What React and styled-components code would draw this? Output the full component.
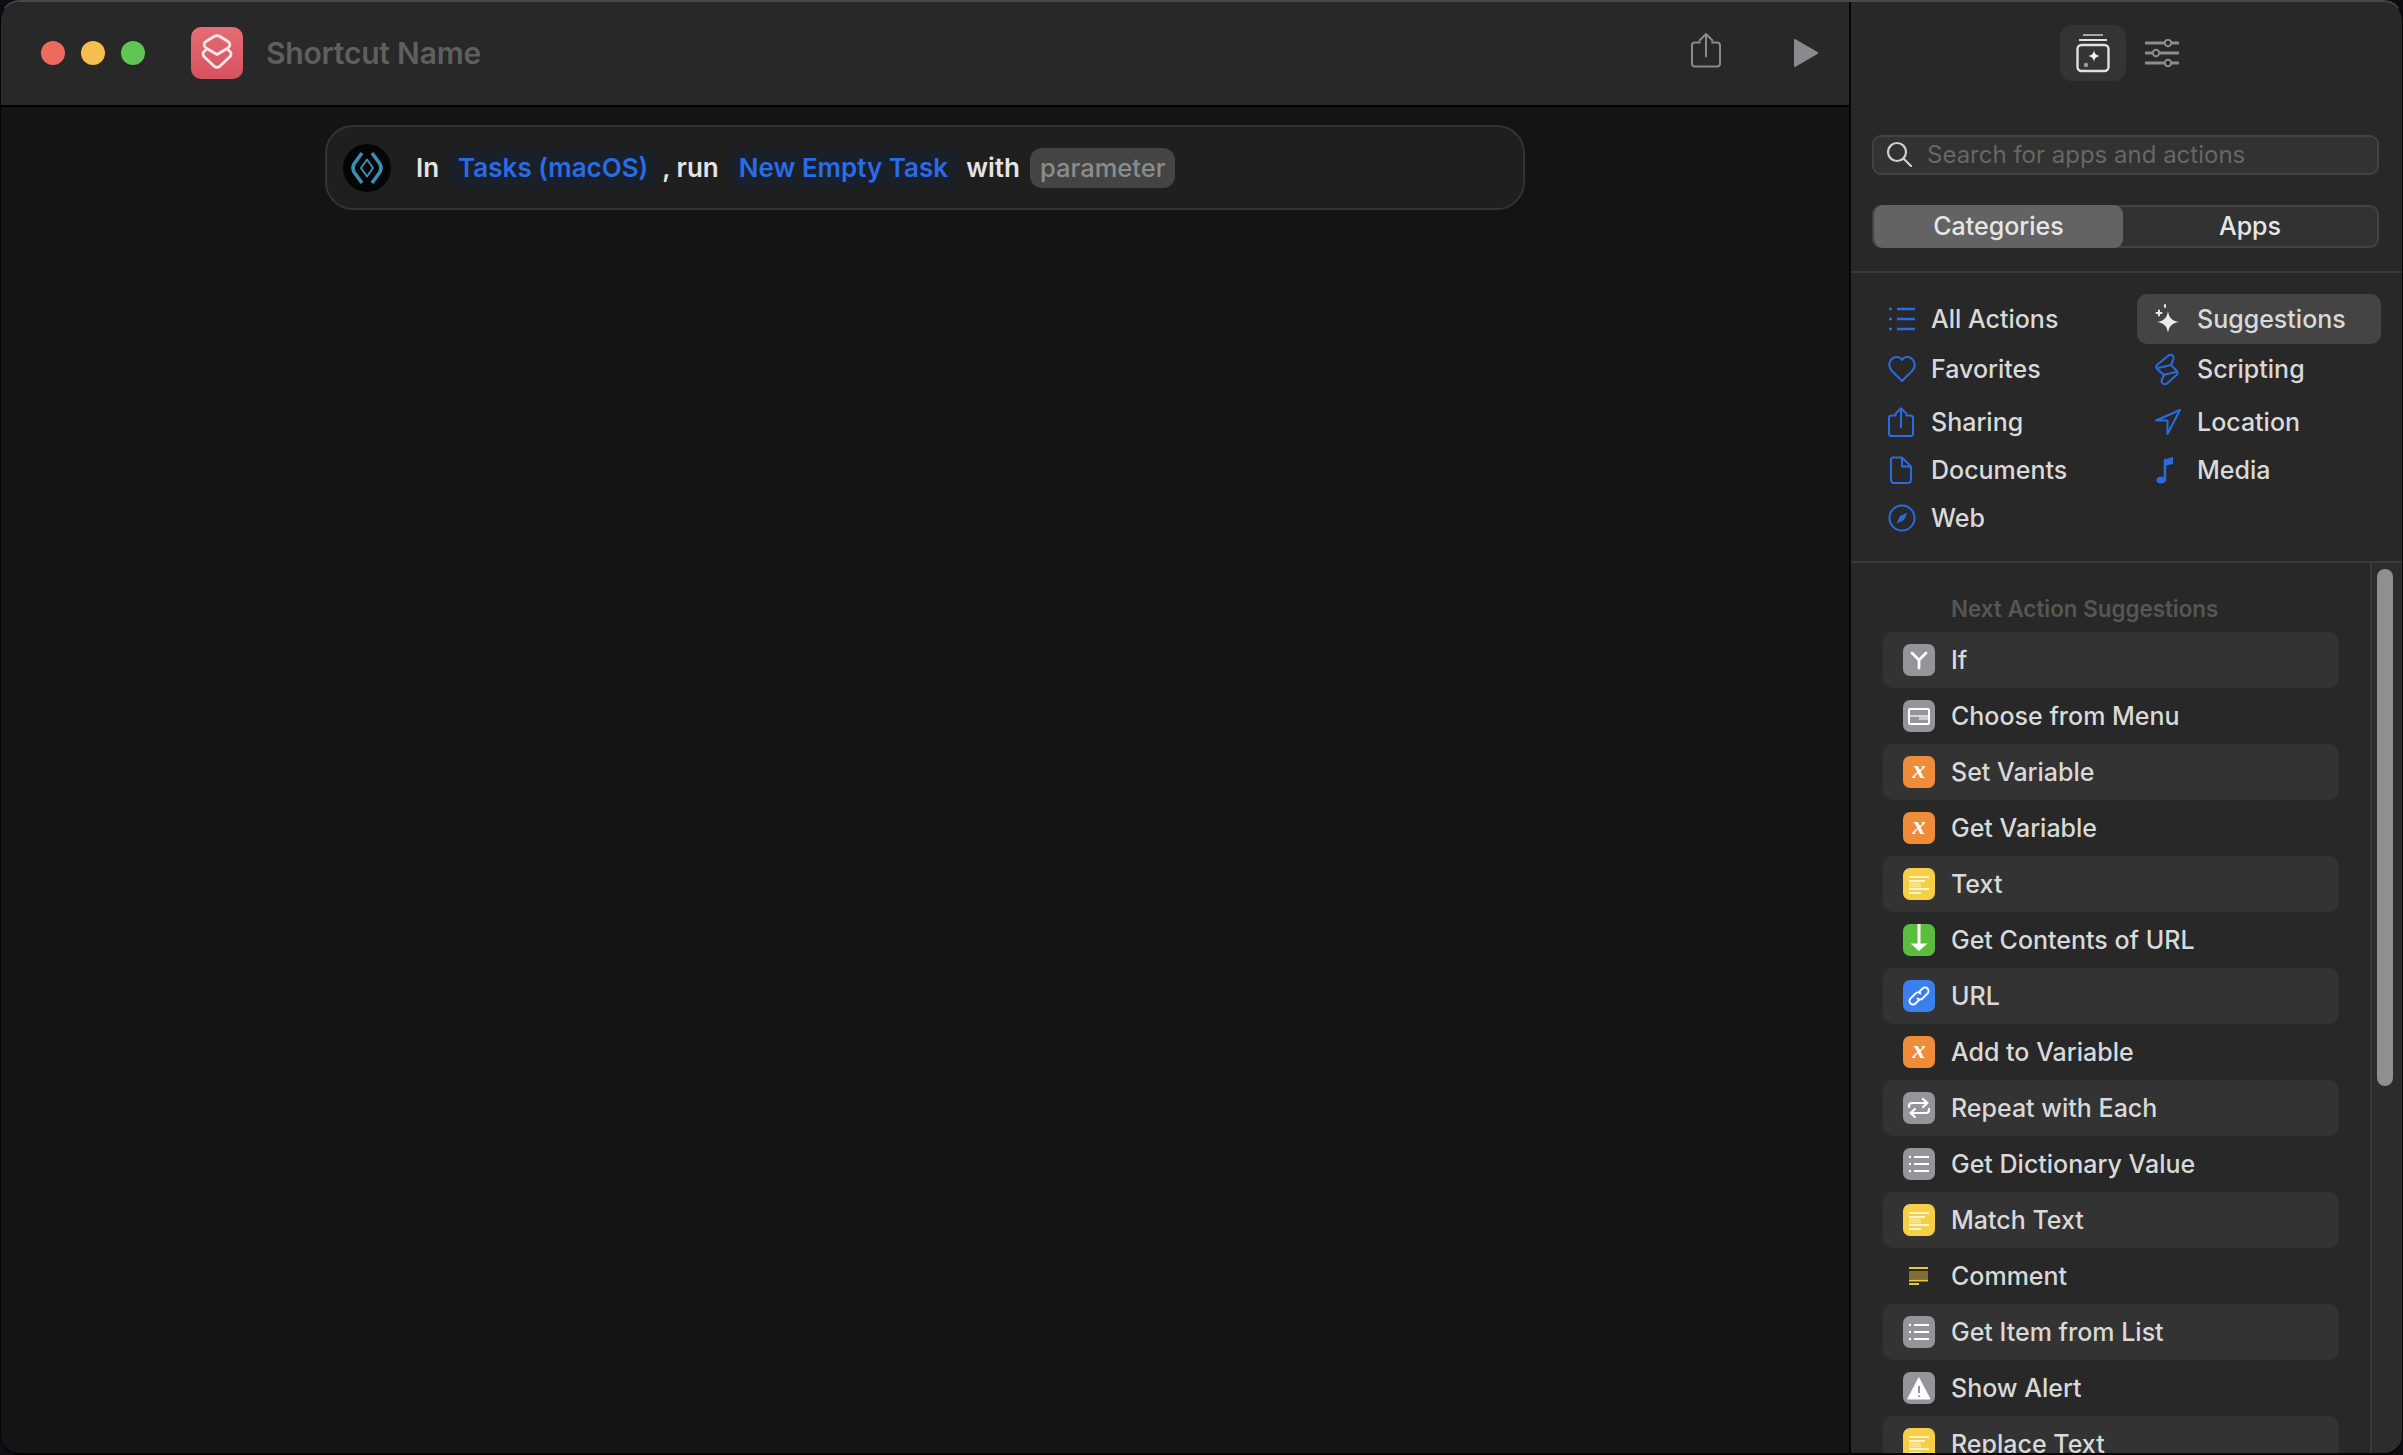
import React from "react";
import styled, { createGlobalStyle } from "styled-components";

const Global = createGlobalStyle`
  html, body { margin: 0; padding: 0; background: #0b0e13; }
  body { font-family: Inter, "Noto Sans", "Liberation Sans", sans-serif; -webkit-font-smoothing: antialiased; }
  * { box-sizing: border-box; }
`;

const Window = styled.div`
  width: 2403px;
  height: 1455px;
  display: flex;
  overflow: hidden;
  border-radius: 20px;
  border: 1px solid #050505;
  border-top: 2px solid #484848;
  border-bottom: 2px solid #050505;
  background: #141414;
`;
const Editor = styled.div`
  width: 1850px;
  flex: none;
  border-right: 2px solid #050505;
  display: flex;
  flex-direction: column;
`;
const TitleBar = styled.header`
  height: 105px;
  flex: none;
  background: #282828;
  border-bottom: 2px solid #000;
  padding-bottom: 2px;
  display: flex;
  align-items: center;
  padding-left: 40px;
`;
const Light = styled.span`
  width: 24px;
  height: 24px;
  border-radius: 50%;
  background: ${(p) => p.$c};
  margin-right: 16px;
  flex: none;
`;
const AppIcon = styled.svg`
  width: 52px;
  height: 52px;
  margin-left: 30px;
  flex: none;
`;
const Title = styled.div`
  margin-left: 23px;
  font-size: 30px;
  font-weight: 600;
  color: #5f5f5f;
  letter-spacing: -0.2px;
`;
const TitleActions = styled.div`
  margin-left: auto;
  display: flex;
  align-items: center;
  padding-right: 31px;
  gap: 73px;
`;
const ShareWrap = styled.span`
  display: block;
  margin-top: -4px;
`;
const Canvas = styled.main`
  flex: 1;
  background: #141414;
  padding: 18px 0 0 324px;
`;
const ActionCard = styled.div`
  width: 1200px;
  height: 85px;
  border: 2px solid #333333;
  border-radius: 28px;
  background: #1f1f1f;
  display: flex;
  align-items: center;
  padding-left: 16px;
  font-size: 26px;
`;
const Word = styled.span`
  font-weight: 600;
  color: #e4e4e4;
  margin-left: ${(p) => p.$ml}px;
`;
const Token = styled.span`
  height: 38px;
  display: flex;
  align-items: center;
  padding: 0 ${(p) => p.$pr}px 0 ${(p) => p.$pl}px;
  border-radius: 9px;
  background: #1a2029;
  color: #2a6be8;
  font-size: 26px;
  font-weight: 600;
  margin-left: ${(p) => p.$ml}px;
`;
const ParamToken = styled.span`
  height: 40px;
  display: flex;
  align-items: center;
  padding: 0 9px 0 10px;
  border-radius: 12px;
  background: #444444;
  color: #8c8c8c;
  font-size: 25.5px;
  font-weight: 500;
  margin-left: ${(p) => p.$ml}px;
`;

const Sidebar = styled.aside`
  flex: 1;
  min-width: 0;
  background: #282828;
  display: flex;
  flex-direction: column;
`;
const SideTop = styled.div`
  height: 271px;
  flex: none;
  padding: 23px 23px 0 21px;
  border-bottom: 2px solid #3a3a3a;
`;
const ToolRow = styled.div`
  display: flex;
  justify-content: center;
  gap: 3px;
  height: 56px;
  padding-left: 4px;
`;
const ToolButton = styled.div`
  width: 66px;
  height: 56px;
  border-radius: 12px;
  background: ${(p) => (p.$active ? "#343434" : "transparent")};
  display: flex;
  align-items: center;
  justify-content: center;
`;
const Search = styled.div`
  margin-top: 54px;
  height: 40px;
  border: 2px solid #424242;
  border-radius: 9px;
  background: #323232;
  display: flex;
  align-items: center;
  padding: 0 0 2px 12px;
  gap: 15px;
  color: #676767;
  font-size: 24px;
`;
const Segmented = styled.div`
  margin-top: 30px;
  height: 43px;
  border-radius: 9px;
  border: 2px solid #434343;
  background: #323232;
  display: grid;
  grid-template-columns: 249px 1fr;
`;
const Segment = styled.div`
  margin: -2px 0;
  padding-bottom: 2px;
  display: flex;
  align-items: center;
  justify-content: center;
  border-radius: 9px;
  font-size: 25px;
  font-weight: 500;
  color: #e6e6e6;
  background: ${(p) => (p.$active ? "#636363" : "transparent")};
`;
const Categories = styled.nav`
  height: 290px;
  flex: none;
  border-bottom: 2px solid #3a3a3a;
  padding: 21px 0 0 37px;
  display: grid;
  grid-template-columns: 249px 244px;
  grid-template-rows: 50px 50px 56px 40px 56px;
  align-content: start;
`;
const CatItem = styled.div`
  height: 50px;
  align-self: center;
  display: flex;
  align-items: center;
  padding-left: ${(p) => (p.$second ? 17 : 0)}px;
  border-radius: 10px;
  background: ${(p) => (p.$active ? "#444444" : "transparent")};
  color: #d9d9d9;
  font-size: 25px;
  font-weight: 500;
`;
const CatIconBox = styled.span`
  width: 43px;
  flex: none;
  display: flex;
  align-items: center;
`;
const ListArea = styled.div`
  flex: 1;
  min-height: 0;
  display: flex;
  overflow: hidden;
`;
const List = styled.div`
  width: 519px;
  flex: none;
  padding-left: 32px;
  overflow: hidden;
`;
const ListHeading = styled.div`
  height: 69px;
  padding: 33px 0 0 68px;
  line-height: 26px;
  font-size: 22.4px;
  font-weight: 600;
  color: #565656;
  white-space: nowrap;
`;
const Row = styled.div`
  width: 456px;
  height: 56px;
  padding-left: 20px;
  display: flex;
  align-items: center;
  gap: 16px;
  border-radius: 10px;
  background: ${(p) => (p.$shade ? "#333333" : "transparent")};
  color: #d9d9d9;
  font-size: 25px;
  font-weight: 500;
  white-space: nowrap;
`;
const Tile = styled.span`
  width: 32px;
  height: 32px;
  flex: none;
  border-radius: 7px;
  background: ${(p) => p.$bg};
  display: flex;
  align-items: center;
  justify-content: center;
  color: #fff;
  overflow: hidden;
`;
const VarGlyph = styled.span`
  font-family: "Liberation Serif", serif;
  font-style: italic;
  font-weight: 700;
  font-size: 26px;
  line-height: 1;
  margin-top: -4px;
`;
const Track = styled.div`
  flex: 1;
  border-left: 2px solid #3a3a3a;
  background: #2c2c2c;
  padding: 6px 0 0 5px;
`;
const Thumb = styled.div`
  width: 16px;
  height: 517px;
  border-radius: 8px;
  background: #8f8f8f;
`;
const Glyph = styled.svg`
  display: block;
  flex: none;
`;

const Blue = "#2a6ae2";

const Ico = ({ w = 28, h = 28, vb, children, color = "currentColor", sw = 2 }) => (
  <Glyph width={w} height={h} viewBox={vb || `0 0 ${w} ${h}`} fill="none" stroke={color} strokeWidth={sw} strokeLinecap="round" strokeLinejoin="round">
    {children}
  </Glyph>
);

const ShareShape = () => (
  <>
    <path d="M9 10H4a3 3 0 0 0-3 3v18a3 3 0 0 0 3 3h22a3 3 0 0 0 3-3V13a3 3 0 0 0-3-3h-5" />
    <path d="M15 24V2M8.5 8 15 1.5 21.5 8" />
  </>
);

const catIcons = {
  all: (
    <Ico color={Blue} sw={2.6}>
      <path d="M1 4h3M1 14h3M1 24h3M9 4h18M9 14h18M9 24h18" strokeLinecap="butt" />
    </Ico>
  ),
  fav: (
    <Ico color={Blue}>
      <path d="M14 26 3.5 15.5C-1.5 9.5 3 2 9 2c2.5 0 4 1.2 5 3 1-1.8 2.5-3 5-3 6 0 10.5 7.5 5.5 13.500Z" />
    </Ico>
  ),
  share: (
    <Ico color={Blue} w={26} h={30} vb="0 0 30 35" sw={2.4}>
      <ShareShape />
    </Ico>
  ),
  doc: (
    <Ico color={Blue} w={26} h={28}>
      <path d="M4 1.500h10l9 9V24a3 3 0 0 1-3 3H6a3 3 0 0 1-3-3V3ZM14 1.500V10.500H23" />
    </Ico>
  ),
  web: (
    <Ico color={Blue}>
      <circle cx="14" cy="14" r="12.500" />
      <path d="M19.500 8.500 16 16l-7.500 3.500L12 12Z" fill={Blue} stroke="none" />
    </Ico>
  ),
  sug: (
    <Ico color="#e8e8e8" w={26} h={30}>
      <path d="M14 7c1.200 7 3.500 9.500 11 11-7.500 1.500-9.800 4-11 11-1.200-7-3.500-9.500-11-11 7.500-1.500 9.800-4 11-11Z" fill="#ececec" stroke="none" />
      <path d="M5 6.500v5M2.500 9h5M11 1v2" />
    </Ico>
  ),
  script: (
    <Ico color={Blue} w={26} h={33}>
      <path d="M15 2c3-1 5 1 4.500 4L17 12l6 6c1 1.500.5 3-.5 4L13 30.500c-3 2-6.500-.5-5-4l2-4.500-7-6c-1-1.500-1-3 0-4Z" />
      <path d="M4 15 17 12M9 22l13-3" />
    </Ico>
  ),
  loc: (
    <Ico color={Blue}>
      <path d="M26 2 2 12.500h11.500V26Z" />
    </Ico>
  ),
  media: (
    <Ico color={Blue} w={26} h={28}>
      <path d="M11 24V4" strokeWidth="2.500" />
      <path d="M10 3.500 19 1v7l-9 2Z" fill={Blue} stroke="none" />
      <ellipse cx="7" cy="24" rx="4.500" ry="3.500" fill={Blue} stroke="none" />
    </Ico>
  ),
};

const T = {
  fork: (
    <Ico w={32} h={32} sw={2.8}>
      <path d="M16 24V16L9 9M16 16l7-7" />
    </Ico>
  ),
  menu: (
    <Ico w={32} h={32} sw={2}>
      <rect x="6" y="9" width="20" height="15" rx="1" />
      <path d="M6 16h20" strokeWidth="1.500" opacity=".8" />
      <path d="M16 18.500h9" strokeWidth="3" opacity=".5" strokeLinecap="butt" />
    </Ico>
  ),
  text: (
    <Ico w={32} h={32} sw={1.600}>
      <path d="M6 9h20M6 13h16M6 21h20M6 25h12" strokeLinecap="butt" />
      <path d="M6 17h12" strokeWidth="5" opacity=".35" strokeLinecap="butt" />
    </Ico>
  ),
  down: (
    <Ico w={32} h={32} sw={3}>
      <path d="M16 0v24" strokeLinecap="butt" />
      <path d="M7.500 19.500h17L16 27Z" fill="#fff" stroke="none" />
    </Ico>
  ),
  link: (
    <Ico w={32} h={32} sw={1.800}>
      <path d="M14 19l-3.500 3.500a3.500 3.500 0 0 1-5-5l5-5a3.500 3.500 0 0 1 5 0" transform="translate(2 1)" />
      <path d="M18 13l3.500-3.500a3.500 3.500 0 0 1 5 5l-5 5a3.500 3.500 0 0 1-5 0" transform="translate(-2 -1)" />
    </Ico>
  ),
  repeat: (
    <Ico w={32} h={32} sw={2.200}>
      <path d="M6 15v-1a3 3 0 0 1 3-3h15M20 7l4.500 4L20 15" />
      <path d="M26 17v1a3 3 0 0 1-3 3H8M12 25l-4.500-4L12 17" />
    </Ico>
  ),
  list: (
    <Ico w={32} h={32} sw={2}>
      <path d="M6 9h2M6 16h2M6 23h2M11 9h15M11 16h15M11 23h15" strokeLinecap="butt" />
    </Ico>
  ),
  alert: (
    <Ico w={32} h={32} sw={1}>
      <path d="M16 6 27 27H5Z" fill="#fff" stroke="#fff" />
      <path d="M16 14v7M16 23.500v1.500" stroke="#94949a" strokeWidth="2" strokeLinecap="butt" />
    </Ico>
  ),
  comment: (
    <Ico w={32} h={32} sw={2} color="#ecc63f">
      <path d="M6 8h19M6 24h10" strokeLinecap="butt" />
      <path d="M6 15h19" strokeWidth="8" opacity=".45" strokeLinecap="butt" />
      <path d="M6 20.500h19" strokeLinecap="butt" />
    </Ico>
  ),
};

const Var = () => <VarGlyph>x</VarGlyph>;
const gray = "#94949a";
const orange = "#ee8c3a";
const yellow = "#f6cf45";

const actions = [
  ["If", gray, T.fork],
  ["Choose from Menu", gray, T.menu],
  ["Set Variable", orange, <Var />],
  ["Get Variable", orange, <Var />],
  ["Text", yellow, T.text],
  ["Get Contents of URL", "#5bbd3c", T.down],
  ["URL", "#3a7ff0", T.link],
  ["Add to Variable", orange, <Var />],
  ["Repeat with Each", gray, T.repeat],
  ["Get Dictionary Value", gray, T.list],
  ["Match Text", yellow, T.text],
  ["Comment", "transparent", T.comment],
  ["Get Item from List", gray, T.list],
  ["Show Alert", gray, T.alert],
  ["Replace Text", yellow, T.text],
];

const cats = [
  ["All Actions", "all"],
  ["Suggestions", "sug", true],
  ["Favorites", "fav"],
  ["Scripting", "script"],
  ["Sharing", "share"],
  ["Location", "loc"],
  ["Documents", "doc"],
  ["Media", "media"],
  ["Web", "web"],
];

export default function App() {
  return (
    <>
      <Global />
      <Window>
        <Editor>
          <TitleBar>
            <Light $c="#ee6a5f" />
            <Light $c="#f5bf4f" />
            <Light $c="#61c554" />
            <AppIcon viewBox="0 0 52 52">
              <defs>
                <linearGradient id="appGrad" x1="0" y1="0" x2="0" y2="1">
                  <stop offset="0" stopColor="#e56c75" />
                  <stop offset="1" stopColor="#d5525f" />
                </linearGradient>
              </defs>
              <rect width="52" height="52" rx="10" fill="url(#appGrad)" />
              <g fill="none" stroke="#fbe7e8" strokeWidth="2.800" strokeLinejoin="round">
                <path d="M23 9.500c1.500-.8 4.500-.8 6 0l8 5c2.500 1.800 2.500 4.500 0 6.500l-11 6.500L15 21c-2.500-2-2.500-4.700 0-6.500Z" />
                <path d="M15.500 22.500 14 23.500c-2.700 2-2.700 5 0 7l9.500 9c1.500 1 3.500 1 5 0l9.500-9c2.700-2 2.700-5 0-7l-1.500-1" />
              </g>
            </AppIcon>
            <Title>Shortcut Name</Title>
            <TitleActions>
              <ShareWrap>
                <Ico w={30} h={37} vb="0 0 30 36" color="#8a8a8a" sw={2}>
                  <ShareShape />
                </Ico>
              </ShareWrap>
              <svg width="24" height="28" viewBox="0 0 24 28" style={{ display: "block" }}>
                <path d="M0 1v26a1 1 0 0 0 1.500.8L23.500 15a1.200 1.200 0 0 0 0-2L1.500.2A1 1 0 0 0 0 1Z" fill="#8a8a8e" />
              </svg>
            </TitleActions>
          </TitleBar>
          <Canvas>
            <ActionCard>
              <svg width="48" height="48" viewBox="0 0 48 48" style={{ flex: "none", display: "block" }}>
                <circle cx="24" cy="24" r="24" fill="#050505" />
                <g fill="none" stroke="#3b8db3" strokeLinejoin="round">
                  <path d="M19 9 11 20Q9 24 11 28L19 39" strokeWidth="3.600" />
                  <path d="M29 9 37 20Q39 24 37 28L29 39" strokeWidth="3.600" />
                  <path d="M24 15.500 18 24 24 32.500 30 24Z" strokeWidth="2" />
                </g>
              </svg>
              <Word $ml={25}>In</Word>
              <Token $ml={10} $pl={9} $pr={10}>Tasks (macOS)</Token>
              <Word $ml={4}>, run</Word>
              <Token $ml={11} $pl={9} $pr={9}>New Empty Task</Token>
              <Word $ml={9}>with</Word>
              <ParamToken $ml={10}>parameter</ParamToken>
            </ActionCard>
          </Canvas>
        </Editor>
        <Sidebar>
          <SideTop>
            <ToolRow>
              <ToolButton $active>
                <svg width="34" height="40" viewBox="0 0 34 40" style={{ display: "block" }} fill="none" stroke="#e0e0e0">
                  <path d="M7 2h20" strokeWidth="2" stroke="#a8a8a8" />
                  <path d="M3 7h28" strokeWidth="2" />
                  <rect x="1.500" y="12" width="31" height="26" rx="4" strokeWidth="2.400" />
                  <path d="M18 17c.7 4 2 5.300 6 6-4 .7-5.300 2-6 6-.7-4-2-5.300-6-6 4-.7 5.300-2 6-6Z" fill="#f2f2f2" stroke="none" />
                  <circle cx="10" cy="32" r="2.200" fill="#9a9a9a" stroke="none" />
                </svg>
              </ToolButton>
              <ToolButton>
                <svg width="34" height="28" viewBox="0 0 34 28" style={{ display: "block" }} fill="none" stroke="#8c8c8c" strokeWidth="3">
                  <path d="M0 4h20M26 4h8M0 14h8M14 14h20M0 24h20M26 24h8" />
                  <circle cx="23" cy="4" r="3.200" strokeWidth="2" />
                  <circle cx="11" cy="14" r="3.200" strokeWidth="2" />
                  <circle cx="23" cy="24" r="3.200" strokeWidth="2" />
                </svg>
              </ToolButton>
            </ToolRow>
            <Search>
              <Ico w={26} h={26} color="#cfcfcf" sw={2.200}>
                <circle cx="11" cy="11" r="9" />
                <path d="M18 18l7 7" />
              </Ico>
              Search for apps and actions
            </Search>
            <Segmented>
              <Segment $active>Categories</Segment>
              <Segment>Apps</Segment>
            </Segmented>
          </SideTop>
          <Categories>
            {cats.map(([label, icon, active], i) => (
              <CatItem key={label} $second={i % 2 === 1} $active={active}>
                <CatIconBox>{catIcons[icon]}</CatIconBox>
                {label}
              </CatItem>
            ))}
          </Categories>
          <ListArea>
            <List>
              <ListHeading>Next Action Suggestions</ListHeading>
              {actions.map(([label, bg, icon], i) => (
                <Row key={label} $shade={i % 2 === 0}>
                  <Tile $bg={bg}>{icon}</Tile>
                  {label}
                </Row>
              ))}
            </List>
            <Track>
              <Thumb />
            </Track>
          </ListArea>
        </Sidebar>
      </Window>
    </>
  );
}
